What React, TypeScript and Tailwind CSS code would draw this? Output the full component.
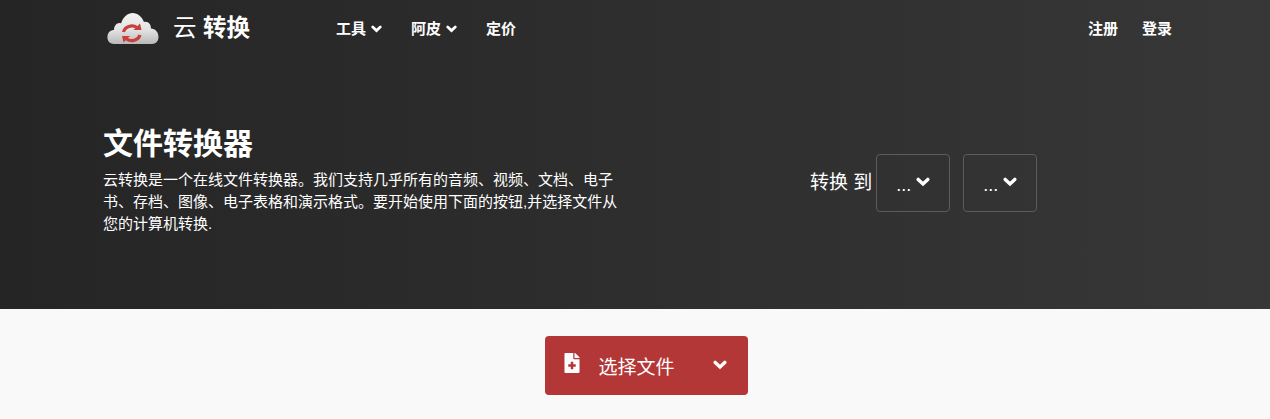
import { FaFileMedical } from "react-icons/fa";

const font = "font-['Liberation_Sans','Noto_Sans_CJK_SC',sans-serif]";

function Chevron({ className }: { className: string }) {
  return (
    <svg viewBox="0 0 14 10" className={className} fill="none" stroke="currentColor" strokeWidth="3.4" strokeLinecap="round" strokeLinejoin="miter" aria-hidden>
      <path d="M2.2 2.4 L7 7 L11.8 2.4" />
    </svg>
  );
}

function Logo() {
  return (
    <svg width="54" height="34" viewBox="0 0 54 34" aria-hidden>
      <defs>
        <linearGradient id="cloud" x1="0" y1="0" x2="0" y2="1">
          <stop offset="0" stopColor="#f4f4f4" />
          <stop offset="0.55" stopColor="#e2e2e2" />
          <stop offset="1" stopColor="#b9b9b9" />
        </linearGradient>
      </defs>
      <path
        d="M7 32 C2 32 0 28 0.5 24 C1 20 4 18 7 18 C7 13 11 10 14 11.5 C16 5 21 1 25.5 1 C31 1 35 5 37 10 C41 9 44 12 44 16.5 C48 16.5 51.5 20 51.5 25 C51.5 29 49 32 45 32 Z"
        fill="url(#cloud)"
      />
      <g fill="none" stroke="#c8403c" strokeWidth="3.2">
        <path d="M16.5 20 A8.5 7.5 0 0 1 30 15.5" />
        <path d="M33 23 A8.5 7.5 0 0 1 19.5 27" />
      </g>
      <path d="M26.5 18 L34.5 18 L33 11.5 Z" fill="#c8403c" />
      <path d="M23 24 L15 24 L16.5 30.5 Z" fill="#c8403c" />
    </svg>
  );
}

function NavItem({ label, caret }: { label: string; caret?: boolean }) {
  return (
    <a className="flex items-center gap-[5px] text-[15px] font-bold text-white">
      {label}
      {caret && <Chevron className="w-[11px] h-[8px]" />}
    </a>
  );
}

function Select() {
  return (
    <button className="flex h-[58px] w-[74px] items-center justify-center gap-[5px] rounded-[4px] border border-[#5c5c5c] text-white">
      <span className="pt-[3px] text-[18px] leading-none">...</span>
      <Chevron className="w-[14px] h-[10px] mb-[3px]" />
    </button>
  );
}

export default function App() {
  return (
    <div className={`${font} min-h-[419px] bg-[#f9f9f9]`}>
      <header className="h-[309px] bg-gradient-to-r from-[#252525] to-[#373737] pl-[104px] pr-[98px]">
        <nav className="flex h-[58px] items-center">
          <div className="flex w-[232px] items-center gap-[12px] pl-[3px]">
            <Logo />
            <span className="text-[23.5px] whitespace-pre text-white">
              云 <b>转换</b>
            </span>
          </div>
          <div className="flex items-center gap-[29px]">
            <NavItem label="工具" caret />
            <NavItem label="阿皮" caret />
            <NavItem label="定价" />
          </div>
          <div className="ml-auto flex gap-[24px]">
            <NavItem label="注册" />
            <NavItem label="登录" />
          </div>
        </nav>
        <div className="mt-[66px] flex">
          <div className="w-[520px] -ml-[1px]">
            <h1 className="text-[30px] leading-[40px] font-bold text-white">文件转换器</h1>
            <p className="mt-[5px] text-[15px] leading-[22px] text-white">
              云转换是一个在线文件转换器。我们支持几乎所有的音频、视频、文档、电子书、存档、图像、电子表格和演示格式。要开始使用下面的按钮,并选择文件从您的计算机转换.
            </p>
          </div>
          <div className="ml-[187px] mt-[30px] flex h-[58px] items-center">
            <span className="mr-[4px] text-[19px] text-white">转换 到</span>
            <Select />
            <div className="w-[13px]" />
            <Select />
          </div>
        </div>
      </header>
      <main className="flex justify-center pt-[27px] pl-[22px]">
        <button className="flex h-[59px] w-[203px] items-center rounded-[4px] bg-[#b33736] pl-[18px] pr-[21px] text-white">
          <FaFileMedical className="mb-[6px] h-[20px] w-[18px]" />
          <span className="ml-[18px] pt-[5px] text-[19px]">选择文件</span>
          <Chevron className="ml-auto w-[14px] h-[10px] mb-[2px]" />
        </button>
      </main>
    </div>
  );
}
